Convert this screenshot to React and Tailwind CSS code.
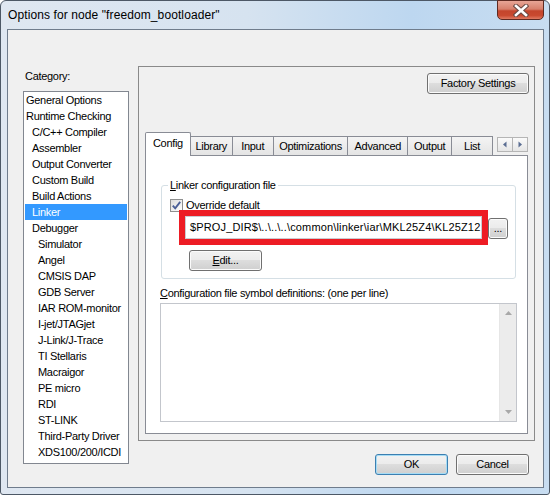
import React from 'react';

const categories = [
    ["General Options", 0], ["Runtime Checking", 0], ["C/C++ Compiler", 1], ["Assembler", 1],
    ["Output Converter", 1], ["Custom Build", 1], ["Build Actions", 1], ["Linker", 1],
    ["Debugger", 1], ["Simulator", 2], ["Angel", 2], ["CMSIS DAP", 2], ["GDB Server", 2],
    ["IAR ROM-monitor", 2], ["I-jet/JTAGjet", 2], ["J-Link/J-Trace", 2], ["TI Stellaris", 2],
    ["Macraigor", 2], ["PE micro", 2], ["RDI", 2], ["ST-LINK", 2], ["Third-Party Driver", 2],
    ["XDS100/200/ICDI", 2],
];

const indent = ["pl-[1px]", "pl-[7px]", "pl-[13px]"];

const tabs = [
    { label: "Config", width: "w-[46px]", active: true },
    { label: "Library", width: "w-[43px]" },
    { label: "Input", width: "w-[42px]" },
    { label: "Optimizations", width: "w-[76px]" },
    { label: "Advanced", width: "w-[61px]" },
    { label: "Output", width: "w-[45px]" },
    { label: "List", width: "w-[42px]" },
];

const WinButton = ({ children, className = "", primary }) => (
    <div
        className={`flex items-center justify-center rounded-[3px] border text-[11px] leading-[13px] text-black bg-[linear-gradient(#f2f2f2_0%,#ebebeb_50%,#dddddd_50%,#cfcfcf_100%)] ${primary ? "border-[#3c7fb1] shadow-[inset_0_0_0_1px_#a6dcf5]" : "border-[#707070] shadow-[inset_0_0_0_1px_#fbfbfb]"} ${className}`}
    >
        {children}
    </div>
);

const ScrollArrow = ({ dir }) => (
    <div className="w-[16px] h-[15px] -ml-px first:ml-0 border border-[#b5b5b5] bg-[linear-gradient(#fafafa,#e6e6e6)] flex items-center justify-center">
        <svg width="6" height="7" viewBox="0 0 6 7">
            {dir === "left"
                ? <path d="M4.5 0.5 L1 3.5 L4.5 6.5 Z" fill="#5a6d92" />
                : <path d="M1.5 0.5 L5 3.5 L1.5 6.5 Z" fill="#5a6d92" />}
        </svg>
    </div>
);

const App = () => {
    return (
        <div className="w-[550px] h-[495px] font-['Liberation_Sans',Arial,sans-serif] text-black tracking-[-0.3px]">
            {/* Window frame */}
            <div className="w-[550px] h-[495px] flex flex-col border border-[#4d5866] rounded-t-[6px] rounded-b-[3px] bg-[linear-gradient(90deg,#dfe7f1_0%,#d6e3f0_45%,#bdd7f0_75%,#c8ddf1_100%)]">
                {/* Title bar */}
                <div className="h-[28px] flex items-center">
                    <div className="pl-[7px] text-[12px] leading-[14px] tracking-[0.1px] flex-1">Options for node "freedom_bootloader"</div>
                    <div className="self-start -mt-px mr-[5px] w-[47px] h-[20px] rounded-b-[5px] border border-[#5e2a22] bg-[linear-gradient(#e8a596_0%,#d7806c_45%,#c4452c_55%,#c9492f_80%,#e07a62_100%)] flex items-center justify-center">
                        <svg width="16" height="13" viewBox="0 0 16 13">
                            <path d="M3 2 L13 11 M13 2 L3 11" stroke="#6b4a44" strokeWidth="4.6" strokeLinecap="square" />
                            <path d="M3 2 L13 11 M13 2 L3 11" stroke="#ffffff" strokeWidth="2.6" strokeLinecap="square" />
                        </svg>
                    </div>
                </div>

                {/* Client area */}
                <div className="ml-[6px] mr-[5px] h-[459px] border border-[#6f7c8c] bg-[#f0f0f0] flex pt-[36px]">
                    {/* Category column */}
                    <div className="ml-[15px] w-[106px] flex flex-col">
                        <div className="mt-[4px] pl-[2px] text-[11px] leading-[13px]">Category:</div>
                        <div className="mt-[8px] h-[373px] border border-[#828790] bg-white flex flex-col">
                            {categories.map(([name, level], i) => (
                                <div
                                    key={i}
                                    className={`mx-px h-[16px] flex items-center text-[11px] leading-[13px] whitespace-nowrap ${indent[level]} ${name === "Linker" ? "bg-[#3399ff] text-white" : ""}`}
                                >
                                    {name}
                                </div>
                            ))}
                        </div>
                    </div>

                    <div className="ml-[9px] w-[397px] flex flex-col">
                        {/* Options box */}
                        <div className="h-[375px] border border-[#8a8a8a] flex flex-col">
                            <div className="flex justify-end pt-[6px] pr-[5px]">
                                <WinButton className="w-[102px] h-[21px]">Factory Settings</WinButton>
                            </div>

                            <div className="mt-[38px] px-[6px] flex flex-col">
                                {/* Tabs */}
                                <div className="relative z-10 -mb-px h-[24px] flex items-end">
                                    {tabs.map((tab) => (
                                        <div
                                            key={tab.label}
                                            className={`-ml-px first:ml-0 flex items-center justify-center border-t border-l border-r border-[#898c95] text-[11px] leading-[13px] ${tab.width} ${tab.active ? "h-[24px] bg-white rounded-t-[2px] pb-[3px] relative z-10" : "h-[19px] mb-px bg-[linear-gradient(#f4f4f4,#e4e4e4)]"}`}
                                        >
                                            {tab.label}
                                        </div>
                                    ))}
                                    <div className="ml-[4px] self-start mt-[5px] flex">
                                        <ScrollArrow dir="left" />
                                        <ScrollArrow dir="right" />
                                    </div>
                                </div>

                                {/* Tab panel */}
                                <div className="h-[279px] border border-[#898c95] bg-white flex flex-col">
                                    <fieldset className="mt-[23px] ml-[15px] mr-[11px] border border-[#d5dfe5] rounded-[3px] pb-[7px]">
                                        <legend className="ml-[6px] px-[2px] text-[11px] leading-[13px]">
                                            <span className="underline">L</span>inker configuration file
                                        </legend>
                                        <div className="mt-[7px] pl-[8px] h-[13px] flex items-center">
                                            <div className="w-[13px] h-[13px] border border-[#8e8f8f] bg-[linear-gradient(135deg,#dcdcdc,#ffffff)] flex items-center justify-center">
                                                <svg width="11" height="11" viewBox="0 0 11 11">
                                                    <path d="M1.8 5.6 L4.2 8.3 L9.2 1.8" fill="none" stroke="#4a5f97" strokeWidth="1.9" />
                                                </svg>
                                            </div>
                                            <div className="ml-[3px] text-[11px] leading-[13px]">O<span className="underline">v</span>erride default</div>
                                        </div>
                                        <div className="-mt-[2px] ml-[17px] flex items-center">
                                            <div className="w-[309px] h-[35px] border-[6px] border-[#ed1c24]">
                                                <div className="h-full border border-[#c9ccd2] bg-white flex items-center pl-[4px] overflow-hidden">
                                                    <span className="text-[11px] leading-[13px] tracking-[0.15px] whitespace-nowrap">$PROJ_DIR$\..\..\..\common\linker\iar\MKL25Z4\KL25Z12</span>
                                                </div>
                                            </div>
                                            <WinButton className="w-[20px] h-[21px] mt-[2px]">...</WinButton>
                                        </div>
                                        <div className="mt-[5px] ml-[27px]">
                                            <WinButton className="w-[73px] h-[21px]">
                                                <span><span className="underline">E</span>dit...</span>
                                            </WinButton>
                                        </div>
                                    </fieldset>

                                    <div className="mt-[8px] ml-[14px] text-[11px] leading-[13px]">
                                        <span className="underline">C</span>onfiguration file symbol definitions: (one per line)
                                    </div>
                                    <div className="mt-[3px] ml-[14px] mr-[10px] h-[119px] border border-[#c3c6cc] bg-white flex justify-end">
                                        <div className="w-[17px] h-full border-l border-[#e6e6e6] bg-[#ececec] flex flex-col items-center justify-between py-[7px]">
                                            <svg width="7" height="4" viewBox="0 0 7 4"><path d="M0 4 L3.5 0 L7 4 Z" fill="#a8a8a8" /></svg>
                                            <svg width="7" height="4" viewBox="0 0 7 4"><path d="M0 0 L3.5 4 L7 0 Z" fill="#a8a8a8" /></svg>
                                        </div>
                                    </div>
                                </div>
                            </div>
                        </div>

                        {/* Dialog buttons */}
                        <div className="mt-[13px] mr-[6px] flex justify-end gap-[8px]">
                            <WinButton primary className="w-[73px] h-[21px]">OK</WinButton>
                            <WinButton className="w-[73px] h-[21px]">Cancel</WinButton>
                        </div>
                    </div>
                </div>
            </div>
        </div>
    );
};

export default App;
